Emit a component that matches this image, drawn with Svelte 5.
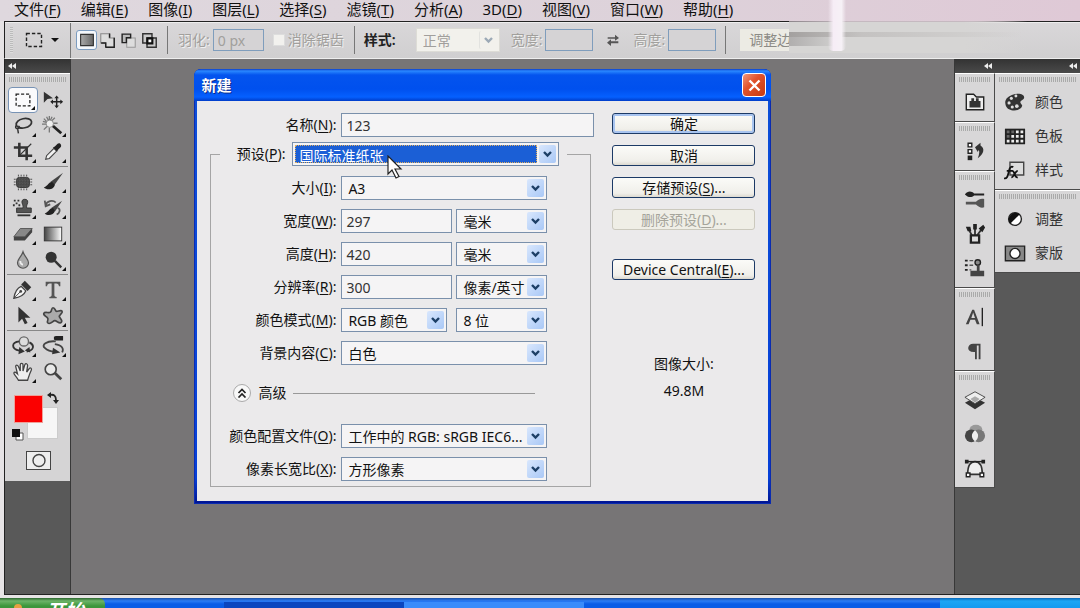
<script>
    let docName = $state('123')
    let docWidth = $state('297')
    let docHeight = $state('420')
    let resolution = $state('300')

    const menus = [
        ['文件', 'F'], ['编辑', 'E'], ['图像', 'I'], ['图层', 'L'], ['选择', 'S'], ['滤镜', 'T'],
        ['分析', 'A'], ['3D', 'D'], ['视图', 'V'], ['窗口', 'W'], ['帮助', 'H']
    ]

    // every icon is drawn on a 24 x 24 grid
    const icons = {
        marquee: '<rect x="4.5" y="5.5" width="15" height="13" fill="none" stroke="#222" stroke-width="1.4" stroke-dasharray="3.4 2"/>',
        move: '<path d="M2 3v12l4-4 6-1z" fill="#333"/><path d="M16 7l2.5 3h-1.700v3.200H20v-1.700l3 2.500-3 2.500v-1.700h-3.200V18h1.700L16 21l-2.500-3h1.700v-3.200H12v1.700L9 14l3-2.500v1.700h3.200V10h-1.700z" fill="#222"/>',
        lasso: '<ellipse cx="13" cy="9" rx="8.500" ry="5" fill="none" stroke="#333" stroke-width="1.900" transform="rotate(-12 13 9)"/><path d="M5 11c-2 2-1 4 1 4s3-2 1-3M6 14l1 6" fill="none" stroke="#333" stroke-width="1.600"/>',
        wand: '<path d="M8 1v5M8 14v5M0 10h5M12 9h5M2 4l4 4M14 3l-4 4M2 16l4-4M11 2L9 6M5 2l2 4M1 7l4 1" stroke="#777" stroke-width="1.400"/><circle cx="8.500" cy="9.500" r="4" fill="#eee" stroke="#888"/><path d="M12 12l9 8" stroke="#222" stroke-width="3"/>',
        crop: '<path d="M8 2v14h14M2 7h14v14" fill="none" stroke="#333" stroke-width="2.800"/><path d="M8 16L21 3" stroke="#333" stroke-width="1.200"/>',
        dropper: '<path d="M4 20l1-4 8-8 3 3-8 8z" fill="#f0f0f0" stroke="#444" stroke-width="1.200"/><path d="M12 7l2-1 3-3c2-2 5 1 3.500 3.500l-3 3-1 2z" fill="#222"/>',
        patch: '<rect x="5" y="7" width="14" height="11" rx="3" fill="#555" stroke="#333"/><path d="M7 4v17M10 4v17M13 4v17M16 4v17M2 9h20M2 12h20M2 15h20" stroke="#444" stroke-width="1" stroke-dasharray="2 1"/>',
        brush: '<path d="M23 2L9 12l4 4z" fill="#444"/><path d="M11 12c-4 0-4 4-9 6 3 3 11 3 12-3z" fill="#222"/>',
        stamp: '<path d="M11 4c-1 3 2 5 1 8H5v5h16v-5h-5c-1-3 2-5 1-8-1-2-5-2-6 0z" fill="#555" stroke="#333"/><path d="M6 20h14" stroke="#333" stroke-width="2"/><path d="M2 3h2v2H2zM6 3h2v2H6zM4 6h2v2H4zM1 8h2v2H1zM7 8h2v2H7z" fill="#333"/>',
        history: '<path d="M22 4L10 12l4 4z" fill="#444"/><path d="M12 12c-4 0-4 4-9 6 3 3 10 2 11-3z" fill="#222"/><path d="M4 9c1-5 8-6 11-3M3 4l1 6 5-2M17 12c4 1 2 6-1 7" fill="none" stroke="#555" stroke-width="1.900"/>',
        eraser: '<path d="M9 6h13l-8 9H2z" fill="#888" stroke="#555"/><path d="M2 15h12v4H2zM14 15l8-9v4l-8 9z" fill="#444"/>',
        gradient: '<defs><linearGradient id="grad"><stop stop-color="#444"/><stop offset="1" stop-color="#fff"/></linearGradient></defs><rect x="2.500" y="4.500" width="19" height="15" fill="url(#grad)" stroke="#333"/>',
        drop: '<path d="M12 3c2 6 6 8 6 12a6 6 0 0 1-12 0c0-4 4-6 6-12z" fill="#aaa" stroke="#555" stroke-width="1.300"/><path d="M9 13c0 3 2 4 3 4" stroke="#eee" stroke-width="2" fill="none"/>',
        dodge: '<circle cx="10" cy="9" r="6" fill="#333"/><path d="M14 13l7 7" stroke="#333" stroke-width="2.600"/>',
        pen: '<path d="M2 21c1-6 3-11 8-13l5 5c-2 5-7 7-13 8z" fill="#f4f4f4" stroke="#444" stroke-width="1.400"/><path d="M2 21l7-7" stroke="#444"/><circle cx="9.500" cy="13.500" r="1.500" fill="#444"/><path d="M10 6l4-4 7 7-4 4z" fill="#333"/>',
        type: '<path d="M4 3h16v5h-1.500c-.3-2-1-3-3-3H13.500v12c0 2 .5 2.500 2.500 2.600V21H8v-1.400c2-.1 2.500-.6 2.500-2.600V5H8.500c-2 0-2.700 1-3 3H4z" fill="#555"/>',
        arrow: '<path d="M7 2v17l4-4 3 6 3-1.500-3-5.500h6z" fill="#333"/>',
        shape: '<path d="M12 3c3 0 2 4 4 4s5-2 6 0-4 4-3 6 4 4 2 6-5-2-7-2-4 4-7 3 1-4-1-6-5-3-4-5 5 0 7-1 1-5 3-5z" fill="#aaa" stroke="#444" stroke-width="1.800"/>',
        rotate: '<circle cx="13" cy="7" r="5" fill="#ddd" stroke="#666" stroke-width="1.500"/><path d="M8 7C-1 8-1 15 8 17M19 8c6 3 5 9-3 10" fill="none" stroke="#333" stroke-width="2"/><path d="M8 13l6 5-7 3zM19 13l-5 4 6 2z" fill="#333"/>',
        orbit: '<path d="M15 7C5 6-1 11 3 14c2 2 6 4 11 4M14 10c8 1 10 5 8 9" fill="none" stroke="#444" stroke-width="2"/><path d="M12 14l8 5-9 2z" fill="#333"/><path d="M15 1h8v5h-8l-2-1V2z" fill="#222"/>',
        hand: '<path d="M7 21c-2-4-5-6-5-8 1-2 3 0 4 1L4 6c0-2 2-2 3 0l2 5V4c0-2 3-2 3 0v7l2-7c1-2 3-1 3 1l-1 7 3-4c1-1 3 0 2 2-2 4-3 8-4 11z" fill="#eee" stroke="#444" stroke-width="1.400"/>',
        zoom: '<circle cx="9.500" cy="9" r="6" fill="#e8e8e8" stroke="#444" stroke-width="1.800"/><path d="M14 13l7 7" stroke="#444" stroke-width="3"/>',
        bridge: '<path d="M2.500 20.500v-17h8l3 3h8v14z" fill="#eee" stroke="#222" stroke-width="1.500"/><path d="M6 11h2V8h3v3h2V8h3v3h2v7H6z" fill="#333"/>',
        historyPanel: '<path d="M4.500 3.500h4v4h-4zM4.500 10.500h4v4h-4z" fill="#fff" stroke="#222" stroke-width="1.500"/><path d="M4 17h5v5H4z" fill="#222"/><path d="M12 8l6-5v3c5 3 4 9-3 14 2-5 2-8 1-9l-1 2z" fill="#333"/>',
        brushes: '<path d="M1 6c3-4 7-4 10-1h11v2H11c-3 3-7 2-10-1z" fill="#222"/><path d="M2 14h11c3-3 6-4 9-3v9c-3 1-6 0-9-3H2z" fill="#555"/>',
        tools: '<path d="M9 14L5 7M12 14V5M14 14l5-7" stroke="#333" stroke-width="2"/><path d="M2 4l5 0 1 5-4 0zM10 1h4v6h-4zM16 6l5-4 2 3-3 5z" fill="#222"/><path d="M7.500 13.500h9v8h-9z" fill="#ddd" stroke="#222" stroke-width="2.500"/>',
        clone: '<path d="M1 4h3M1 9h3M1 14h3" stroke="#222" stroke-width="2"/><path d="M6 4h4M6 9h4M6 14h2" stroke="#555" stroke-width="1.500"/><circle cx="15" cy="6" r="3" fill="#888" stroke="#222" stroke-width="1.500"/><path d="M14 9h3v6h5v6H7v-6h7z" fill="#444"/>',
        character: '<path d="M2 20L9 4h2l6 16h-3l-2-5H7l-2 5zM8 13h4l-2-6z" fill="#444"/><path d="M20 2v20" stroke="#222" stroke-width="1.500"/>',
        paragraph: '<path d="M18 4v17h-2V6h-2v15h-2v-8C2 14 3 4 10 4z" fill="#444"/>',
        layers: '<path d="M1 15l11-6 11 6-11 7z" fill="#333"/><path d="M1 9l11-6 11 6-11 7z" fill="#eee" stroke="#444"/><path d="M7 11l5-3 5 3-5 4z" fill="#aaa"/>',
        channels: '<ellipse cx="13" cy="7" rx="7" ry="5" fill="#999"/><ellipse cx="8" cy="14" rx="7" ry="7" fill="#444"/><ellipse cx="16" cy="14" rx="7" ry="7" fill="#777"/><path d="M12 8c5 4 4 9 0 12-4-3-5-8 0-12z" fill="#eee"/>',
        paths: '<path d="M4 19C4 9 7 5 12 5s8 4 8 14z" fill="#eee" stroke="#333" stroke-width="1.800"/><path d="M3 5h18" stroke="#222" stroke-width="1.500"/><path d="M1 3h4v4H1zM19 3h4v4h-4z" fill="#222"/><path d="M2.500 17.500h4v4h-4zM17.500 17.500h4v4h-4z" fill="#fff" stroke="#222" stroke-width="1.500"/>',
        palette: '<path d="M3 8C8 2 22 1 22 7c0 3-5 3-4 6 1 2 3 2 1 5-4 5-15 4-17-2-1-3-1-5 1-8z" fill="#333"/><circle cx="8" cy="8" r="1.700" fill="#ddd"/><circle cx="13" cy="5.500" r="1.600" fill="#ddd"/><circle cx="5.500" cy="13" r="1.700" fill="#ddd"/><circle cx="9" cy="17.500" r="1.700" fill="#ddd"/><circle cx="14" cy="16.500" r="2" fill="#ddd"/>',
        swatches: '<path d="M1 4h22v17H1z" fill="#222"/><path d="M13 6h3v3h-3zM18 6h3v3h-3zM8 11h3v3H8zM13 11h3v3h-3zM18 11h3v3h-3zM3 16h3v3H3zM8 16h3v3H8zM13 16h3v3h-3zM18 16h3v3h-3z" fill="#eee"/><path d="M3 6h3v3H3zM8 6h3v3H8zM3 11h3v3H3z" fill="#666"/>',
        styles: '<path d="M6.500 3.500h15v14h-15z" fill="#ddd" stroke="#444" stroke-width="1.500"/><path d="M0 21c3 1 4-2 5-6l1-4c1-3 3-3 4-2M3 13h6M9 13c3 0 2 8 6 7M15 13c-3 0-4 7-7 7" fill="none" stroke="#111" stroke-width="2"/>',
        adjust: '<circle cx="12" cy="12" r="7" fill="#fff" stroke="#222" stroke-width="1.500"/><path d="M6.800 17.200a7.400 7.400 0 0 1 10.400-10.400z" fill="#111"/>',
        mask: '<path d="M1.500 4.500h21v16h-21z" fill="#888" stroke="#222" stroke-width="1.500"/><circle cx="12" cy="12.500" r="5.500" fill="#fff" stroke="#222" stroke-width="1.500"/>',
        selNew: '<defs><linearGradient id="sel"><stop stop-color="#aaa"/><stop offset="1" stop-color="#666"/></linearGradient></defs><path d="M3.500 4.500h17v15h-17z" fill="url(#sel)" stroke="#333" stroke-width="1.500"/>',
        selAdd: '<path d="M2.500 2.500h12v6h7v13h-12v-6h-7z" fill="#ddd" stroke="#888" stroke-width="1.500"/><path d="M21.500 8v13.500H9M3 15.500h6.500v6M15 2v6" fill="none" stroke="#222" stroke-width="2"/>',
        selSub: '<path d="M9.500 8.500h12v13h-12z" fill="#ddd" stroke="#999" stroke-width="1.500"/><path d="M15 3H3v12h6V8h6z" fill="#bbb" stroke="#222" stroke-width="2"/>',
        selInt: '<path d="M2.500 2.500h13v13h-13zM8.500 8.500h13v13h-13z" fill="#ccc" stroke="#333" stroke-width="2"/><path d="M9 9h7v7H9z" fill="#fff" stroke="#111" stroke-width="3"/>',
        swap: '<path d="M4 8h11V4l6 5-6 4v-3H4zM20 14H9v-3l-6 5 6 5v-4h11z" fill="#555"/>'
    }

    // third value marks tools that have a fly-out menu
    const toolGroups = [
        [['marquee', '矩形选框', true], ['move', '移动', false], ['lasso', '套索', true], ['wand', '快速选择', true], ['crop', '裁剪', true], ['dropper', '吸管', true]],
        [['patch', '修复', true], ['brush', '画笔', true], ['stamp', '图章', true], ['history', '历史画笔', true], ['eraser', '橡皮擦', true], ['gradient', '渐变', true], ['drop', '模糊', true], ['dodge', '减淡', true]],
        [['pen', '钢笔', true], ['type', '文字', true], ['arrow', '路径选择', true], ['shape', '形状', true]],
        [['rotate', '3D 旋转', true], ['orbit', '3D 环绕', true], ['hand', '抓手', true], ['zoom', '缩放', false]]
    ]

    const dockGroups = [['bridge'], ['historyPanel'], ['brushes', 'tools', 'clone'], ['character', 'paragraph'], ['layers', 'channels', 'paths']]

    const panelGroups = [
        [['palette', '颜色'], ['swatches', '色板'], ['styles', '样式']],
        [['adjust', '调整'], ['mask', '蒙版']]
    ]
</script>

{#snippet icon(name, size)}
    <svg class="icon" width={size} height={size} viewBox="0 0 24 24" aria-hidden="true">{@html icons[name]}</svg>
{/snippet}

{#snippet combo(id, value, cls)}
    <span class="combo {cls}">
        <select {id}>
            <option>{value}</option>
        </select>
        <span class="drop">
            <svg width="9" height="7" viewBox="0 0 9 7" aria-hidden="true"><path d="M1 1l3.500 3.500L8 1" fill="none" stroke="#1d3f66" stroke-width="2.400" /></svg>
        </span>
    </span>
{/snippet}

{#snippet caption(id, text, key)}
    <label for={id}>{text}(<u>{key}</u>):</label>
{/snippet}

<div class="app">
    <nav class="menubar">
        {#each menus as [text, key]}
            <button>{text}(<u>{key}</u>)</button>
        {/each}
    </nav>

    <div class="options">
        <span class="handle"></span>
        <button class="preset" aria-label="工具预设">
            {@render icon('marquee', 24)}
            <span class="caret"></span>
        </button>
        <div class="modes">
            <button class="on" aria-label="新选区">{@render icon('selNew', 18)}</button>
            <button aria-label="添加到选区">{@render icon('selAdd', 17)}</button>
            <button aria-label="从选区减去">{@render icon('selSub', 17)}</button>
            <button aria-label="与选区交叉">{@render icon('selInt', 17)}</button>
        </div>
        <div class="opt feather">
            <label for="feather">羽化:</label>
            <input id="feather" value="0 px" disabled />
            <input id="alias" type="checkbox" disabled />
            <label for="alias">消除锯齿</label>
        </div>
        <div class="opt style">
            <label class="active" for="style">样式:</label>
            {@render combo('style', '正常', 'off')}
            <label for="optw">宽度:</label>
            <input id="optw" disabled />
            {@render icon('swap', 16)}
            <label for="opth">高度:</label>
            <input id="opth" disabled />
        </div>
        <div class="opt">
            <button class="refine" disabled>调整边</button>
        </div>
    </div>
    <div class="smear"></div>
    <div class="beam"></div>

    <div class="workspace">
        <aside class="toolbox">
            <div class="head left"><i></i><i></i></div>
            <div class="tools">
                <div class="grip"></div>
                {#each toolGroups as group}
                    <div class="group">
                        {#each group as [name, label, more]}
                            <button class:more class:on={name === 'marquee'} aria-label={label}>{@render icon(name, 22)}</button>
                        {/each}
                    </div>
                {/each}
                <div class="colors">
                    <button class="back" aria-label="背景色"></button>
                    <button class="fore" aria-label="前景色"></button>
                    <svg class="flip" width="12" height="12" viewBox="0 0 12 12"><path d="M3 3c4-1 6 1 6 5" fill="none" stroke="#222" stroke-width="1.800" /><path d="M0 3l4-3v6zM6 8h6l-3 4z" fill="#222" /></svg>
                    <svg class="reset" width="12" height="12" viewBox="0 0 12 12"><path d="M4 4h7v7H4z" fill="#fff" stroke="#555" /><path d="M0 0h8v8H0z" fill="#111" /></svg>
                </div>
                <button class="quick" aria-label="快速蒙版">
                    <svg width="22" height="17" viewBox="0 0 22 17"><circle cx="11" cy="8.500" r="6" fill="#eee" stroke="#444" stroke-width="1.400" /></svg>
                </button>
            </div>
        </aside>

        <main></main>

        <aside class="dock">
            <div class="head"><i></i><i></i></div>
            {#each dockGroups as group}
                <section>
                    <div class="grip"></div>
                    {#each group as name}
                        <button aria-label={name}>{@render icon(name, 22)}</button>
                    {/each}
                </section>
            {/each}
        </aside>
        <aside class="dock wide">
            <div class="head"><i></i><i></i></div>
            {#each panelGroups as group}
                <section>
                    <div class="grip"></div>
                    {#each group as [name, label]}
                        <button>{@render icon(name, 22)}{label}</button>
                    {/each}
                </section>
            {/each}
        </aside>
    </div>

    <footer class="taskbar">
        <button class="start"><span class="flag"></span>开始</button>
        <span class="task"></span>
        <span class="task light"></span>
        <span class="tray"></span>
    </footer>

    <div class="dialog" role="dialog" aria-labelledby="dialog-title">
        <header>
            <h1 id="dialog-title">新建</h1>
            <button class="close" aria-label="关闭">
                <svg width="13" height="13" viewBox="0 0 13 13"><path d="M1.500 1.500l10 10M11.500 1.500l-10 10" stroke="#fff" stroke-width="2.400" /></svg>
            </button>
        </header>
        <form class="body" onsubmit={(e) => e.preventDefault()}>
            <div class="fields">
                <div class="row name">
                    {@render caption('name', '名称', 'N')}
                    <input id="name" bind:value={docName} />
                </div>
                <fieldset>
                    <legend>
                        {@render caption('doc-preset', '预设', 'P')}
                        {@render combo('doc-preset', '国际标准纸张', 'focus')}
                    </legend>
                    <div class="row">
                        {@render caption('size', '大小', 'I')}
                        <div class="ctl">{@render combo('size', 'A3', '')}</div>
                    </div>
                    <div class="row">
                        {@render caption('width', '宽度', 'W')}
                        <div class="ctl"><input id="width" bind:value={docWidth} />{@render combo('width-unit', '毫米', 'unit')}</div>
                    </div>
                    <div class="row">
                        {@render caption('height', '高度', 'H')}
                        <div class="ctl"><input id="height" bind:value={docHeight} />{@render combo('height-unit', '毫米', 'unit')}</div>
                    </div>
                    <div class="row">
                        {@render caption('res', '分辨率', 'R')}
                        <div class="ctl"><input id="res" bind:value={resolution} />{@render combo('res-unit', '像素/英寸', 'unit')}</div>
                    </div>
                    <div class="row">
                        {@render caption('mode', '颜色模式', 'M')}
                        <div class="ctl">{@render combo('mode', 'RGB 颜色', 'mode')}{@render combo('depth', '8 位', 'unit')}</div>
                    </div>
                    <div class="row">
                        {@render caption('bg', '背景内容', 'C')}
                        <div class="ctl">{@render combo('bg', '白色', '')}</div>
                    </div>
                    <div class="advanced">
                        <button type="button" aria-label="收起高级选项">
                            <svg width="10" height="10" viewBox="0 0 10 10"><path d="M1.500 5L5 1.500 8.500 5M1.500 9.500L5 6l3.500 3.500" fill="none" stroke="#222" stroke-width="1.700" /></svg>
                        </button>
                        <span>高级</span>
                        <hr />
                    </div>
                    <div class="row">
                        {@render caption('profile', '颜色配置文件', 'O')}
                        <div class="ctl">{@render combo('profile', '工作中的 RGB: sRGB IEC6...', '')}</div>
                    </div>
                    <div class="row">
                        {@render caption('aspect', '像素长宽比', 'X')}
                        <div class="ctl">{@render combo('aspect', '方形像素', '')}</div>
                    </div>
                </fieldset>
            </div>
            <div class="side">
                <button class="primary">确定</button>
                <button type="button">取消</button>
                <button type="button">存储预设(<u>S</u>)...</button>
                <button type="button" disabled>删除预设(<u>D</u>)...</button>
                <button type="button" class="central">Device Central(<u>E</u>)...</button>
                <p>图像大小:<br />49.8M</p>
            </div>
        </form>
        <svg class="cursor" width="16" height="24" viewBox="0 0 16 24"><path d="M1 1v18l4-4 4 8 3-1.500-4-7.500h6z" fill="#fff" stroke="#222" stroke-width="1.200" /></svg>
    </div>
</div>

<style>
    :global(body) {
        margin: 0;
    }

    .app {
        position: relative;
        display: flex;
        flex-direction: column;
        height: 100vh;
        overflow: hidden;
        background: #e6e3e5;
        color: #111;
        font: 14px/20px 'Noto Sans', 'Noto Sans CJK SC', sans-serif;
    }

    button, input, select {
        box-sizing: border-box;
        margin: 0;
        padding: 0;
        border: 0;
        border-radius: 0;
        background: none;
        color: inherit;
        font: inherit;
    }

    button {
        display: flex;
        align-items: center;
        justify-content: center;
        white-space: nowrap;
    }

    u {
        text-underline-offset: 2px;
    }

    label {
        white-space: nowrap;
    }

    .icon {
        display: block;
        flex: none;
    }

    .menubar {
        display: flex;
        flex: none;
        gap: 20px;
        height: 21px;
        padding-left: 14px;
        overflow: hidden;
        background: linear-gradient(90deg, #dfd8de, #ddd2da 60%, #dfc9d6);
    }

    .menubar button {
        height: 17px;
        font-size: 15px;
    }

    .options {
        display: flex;
        flex: none;
        align-items: center;
        box-sizing: border-box;
        height: 38px;
        margin-left: 4px;
        border-top: 1px solid #222;
        border-bottom: 1px solid #eee;
        border-left: 1px solid #222;
        background: linear-gradient(#d9d7d9, #d0cfd0);
        box-shadow: inset 0 1px #eee;
    }

    .handle {
        width: 3px;
        height: 26px;
        margin-left: 5px;
        background: repeating-linear-gradient(#bbb 0 1px, #ddd 1px 2px);
    }

    .preset {
        gap: 5px;
        height: 35px;
        padding: 0 11px 0 9px;
        border-right: 1px solid #777;
    }

    .caret {
        border: 4px solid transparent;
        border-top-color: #111;
        border-bottom: 0;
    }

    .modes {
        display: flex;
        align-items: center;
        height: 28px;
        padding: 0 7px 0 5px;
        border-right: 1px solid #777;
    }

    .modes button {
        width: 21px;
        height: 20px;
    }

    .modes .on {
        border: 1px solid #7c9cc0;
        border-radius: 3px;
        background: #f4f7fb;
    }

    .opt {
        display: flex;
        align-items: center;
        height: 28px;
        color: #a19f9c;
    }

    .opt label {
        text-shadow: 1px 1px #f0f0f0;
    }

    .opt input {
        width: 48px;
        height: 22px;
        border: 1px solid #7f9dbc;
        background: #d5d3d5;
    }

    .feather {
        gap: 3px;
        padding: 0 10px;
        border-right: 1px solid #777;
    }

    .feather #feather {
        width: 51px;
        padding-left: 4px;
    }

    .feather #alias {
        width: 12px;
        height: 12px;
        margin-left: 6px;
        border-color: #ddd;
        background: #f2f1ee;
        appearance: none;
    }

    .style {
        gap: 3px;
        padding: 0 9px;
        border-right: 1px solid #777;
    }

    .style .active {
        margin-right: 17px;
        color: #222;
        font-weight: 600;
        text-shadow: none;
    }

    .style .icon {
        margin: 0 9px;
    }

    .refine {
        justify-content: flex-start;
        width: 90px;
        height: 22px;
        margin-left: 14px;
        padding-left: 9px;
        background: #ecebe4;
        color: #8c8b86;
    }

    /* soft light reflection that crosses both bars */
    .smear {
        position: absolute;
        top: 21px;
        right: 0;
        left: 789px;
        height: 32px;
        background:
            linear-gradient(90deg, #8d868b, #c5b9c0 20%, #c5b9c0 60%, #c5b9c000 82%) 0 0 / 100% 1px no-repeat,
            linear-gradient(90deg, #a3a09f, #c4c2c1 25%, #d0d0cd00 80%) 0 11px / 100% 5px no-repeat,
            linear-gradient(90deg, #b0aeae, #cfcecd) 0 16px / 46px 9px no-repeat,
            linear-gradient(90deg, #d6d5d4, #d6d5d4 60%, #d6d5d400 82%);
    }

    .beam {
        position: absolute;
        top: 0;
        left: 828px;
        width: 18px;
        height: 51px;
        border-radius: 0 0 5px 5px;
        background: linear-gradient(90deg, #f5eaf400, #f6edf6 30%, #f6f1f6 75%, #f5eaf400);
    }

    .workspace {
        display: flex;
        flex: 1;
        min-height: 0;
        margin-left: 4px;
        border-bottom: 1px solid #222;
        border-left: 1px solid #222;
        background: #595959;
    }

    main {
        flex: 1;
        border: 1px solid #383838;
        border-width: 0 1px;
        background: #777576;
    }

    .head {
        display: flex;
        align-items: center;
        justify-content: flex-end;
        height: 14px;
        padding: 0 3px;
        background: linear-gradient(#333, #4a4a4a);
    }

    .head.left {
        justify-content: flex-start;
    }

    .head i {
        border: 3px solid transparent;
        border-right: 4px solid #eee;
        border-left: 0;
    }

    .toolbox {
        flex: none;
        width: 65px;
    }

    .tools {
        padding: 3px 0 11px;
        border-top: 1px solid #fff;
        background: #d5d4d5;
    }

    .grip {
        height: 5px;
        margin: 0 4px 3px;
        background: repeating-linear-gradient(90deg, #aaa 0 1px, #d8d8d8 1px 2px);
    }

    .group {
        display: grid;
        grid-template-columns: 30px 30px;
        margin: 0 2px;
        padding: 2px 1px 1px;
        border-top: 1px solid #888;
    }

    .grip + .group {
        border-top: 0;
    }

    .group button {
        position: relative;
        height: 26px;
    }

    .group .on {
        border: 1px solid #7893b5;
        border-radius: 4px;
        background: #fafafc;
    }

    .group .more::after {
        position: absolute;
        right: 2px;
        bottom: 2px;
        border: 2px solid #111;
        border-top-color: transparent;
        border-left-color: transparent;
        content: '';
    }

    .colors {
        position: relative;
        height: 65px;
    }

    .colors * {
        position: absolute;
    }

    .fore {
        top: 9px;
        left: 9px;
        width: 29px;
        height: 28px;
        border: 1px solid #f0a098;
        background: #fb0000;
    }

    .back {
        top: 21px;
        left: 22px;
        width: 31px;
        height: 32px;
        border: 1px solid #ccc;
        background: #f6f6f6;
    }

    .flip {
        top: 6px;
        left: 42px;
    }

    .reset {
        top: 43px;
        left: 7px;
    }

    .quick {
        width: 25px;
        height: 19px;
        margin: 0 auto 0 21px;
        border: 1px solid #444;
        background: #eee;
    }

    .dock {
        flex: none;
        width: 40px;
    }

    .dock section {
        padding: 3px 0 2px;
        border: 1px solid #4a4a4a;
        border-top-color: #fff;
        border-left: 0;
        background: #d8d7d8;
    }

    .dock button {
        width: 100%;
        height: 34px;
        color: #333;
    }

    .wide {
        width: 85px;
    }

    .wide section {
        border-right: 0;
    }

    .wide button {
        justify-content: flex-start;
        gap: 9px;
        padding-left: 9px;
    }

    .taskbar {
        display: flex;
        flex: none;
        height: 10px;
        margin-top: 3px;
        overflow: hidden;
        background: linear-gradient(#1a50a8, #2c7cf4 3px, #0a5ce6 6px);
    }

    .start {
        align-items: flex-start;
        justify-content: flex-start;
        gap: 24px;
        width: 105px;
        padding: 1px 0 0 14px;
        border-radius: 0 6px 0 0;
        background: linear-gradient(#2d6630, #6cb468 3px, #3c963b 8px);
        color: #fff;
        font-size: 19px;
        font-style: italic;
        font-weight: 700;
        line-height: 24px;
    }

    .flag {
        width: 8px;
        height: 4px;
        margin-top: 5px;
        border-radius: 4px 4px 0 0;
        background: #e8a040;
    }

    .task {
        width: 180px;
        margin-top: 4px;
        background: #0b46bf;
    }

    .start + .task {
        margin-left: 119px;
    }

    .task.light {
        background: #3a8cfb;
    }

    .tray {
        width: 140px;
        margin-left: auto;
        background: linear-gradient(#0a67b8, #1ca6f4 3px, #149af0);
    }

    .dialog {
        position: absolute;
        top: 69px;
        left: 18%;
        box-sizing: border-box;
        width: min(577px, 80%);
        padding: 0 3px 3px;
        border-radius: 7px 7px 0 0;
        background: linear-gradient(#0d4fd8, #0640d8 94%, #00138f);
        box-shadow: inset 0 0 0 1px #0a2bb0;
    }

    .dialog header {
        display: flex;
        align-items: center;
        justify-content: space-between;
        height: 32px;
        margin: 0 -3px;
        padding: 0 5px 0 7px;
        box-sizing: border-box;
        border-radius: 7px 7px 0 0;
        background: linear-gradient(#0a3cc8, #2a88ff 2px, #0454ee 6px, #0050ee 20px, #0560ff 28px, #003cc8);
    }

    h1 {
        margin: 0;
        color: #fff;
        font-size: 15px;
        text-shadow: 1px 1px #0b2a86;
    }

    .close {
        width: 24px;
        height: 24px;
        border: 1px solid #fff;
        border-radius: 4px;
        background: linear-gradient(135deg, #f0977c, #e1532c 40%, #c63a10);
    }

    .body {
        display: flex;
        gap: 18px;
        padding: 12px 13px 14px;
        background: #ebeaeb;
    }

    .fields {
        flex: 1;
        min-width: 0;
    }

    .row {
        display: flex;
        align-items: center;
        gap: 5px;
        height: 24px;
        margin-bottom: 9px;
    }

    .row label {
        flex: none;
        width: 125px;
        text-align: right;
    }

    .row input {
        height: 24px;
        padding: 0 4px;
        border: 1px solid #7a90ab;
        background: #f5f4f5;
        color: #333;
    }

    .name {
        margin-bottom: 5px;
        padding-left: 1px;
    }

    .name input {
        flex: 1;
        min-width: 0;
    }

    .ctl {
        display: flex;
        justify-content: space-between;
        width: 206px;
    }

    .ctl input {
        width: 111px;
    }

    .combo {
        display: flex;
        flex: 1;
        box-sizing: border-box;
        height: 24px;
        padding: 2px;
        border: 1px solid #7a90ab;
        background: #f5f4f5;
    }

    .combo select {
        flex: 1;
        min-width: 0;
        padding-left: 4px;
        outline: none;
        appearance: none;
    }

    .combo.unit {
        flex: none;
        width: 91px;
    }

    .combo.mode {
        flex: none;
        width: 106px;
    }

    .combo.focus {
        flex: none;
        width: 267px;
        padding: 2px;
    }

    .focus select {
        padding-left: 3px;
        margin-right: 2px;
        border: 1px dotted #e0b060;
        background: #1b5fd6;
        color: #fff;
    }

    .combo.off {
        flex: none;
        width: 84px;
        margin-right: 8px;
        border-color: #dddcd6;
        background: #f2f1ec;
        color: #a19f9c;
    }

    .drop {
        display: flex;
        align-items: center;
        justify-content: center;
        width: 17px;
        border-radius: 2px;
        background: linear-gradient(135deg, #d9e7fd, #a9c8f6);
    }

    .off .drop {
        border-left: 1px solid #ccc;
        background: none;
        opacity: 0.4;
    }

    fieldset {
        min-width: 0;
        margin: 0 3px 0 0;
        padding: 10px 0 5px;
        border: 1px solid #a5a5a5;
    }

    fieldset .row:last-child {
        margin-bottom: 0;
    }

    legend {
        display: flex;
        align-items: center;
        gap: 7px;
        margin-left: 9px;
        padding: 0 8px 0 14px;
    }

    legend label {
        width: 51px;
        text-align: right;
    }

    .advanced {
        display: flex;
        align-items: center;
        gap: 7px;
        height: 24px;
        margin: 16px 55px 19px 22px;
    }

    .advanced button {
        width: 18px;
        height: 18px;
        border: 1px solid #aaa;
        border-radius: 50%;
        background: #f8f8f8;
    }

    hr {
        flex: 1;
        margin: 0;
        border: 0;
        border-top: 1px solid #999;
    }

    .side {
        display: flex;
        flex: none;
        flex-direction: column;
        gap: 11px;
        width: 143px;
    }

    .side button {
        height: 21px;
        border: 1px solid #1c3a66;
        border-radius: 3px;
        background: linear-gradient(#fbfbf8, #f0efea 80%, #dcd9d0);
    }

    .side .primary {
        box-shadow: inset 0 0 0 2px #a8c4f0;
    }

    .side button:disabled {
        border-color: #cbc9bd;
        background: #efeee6;
        color: #a5a49b;
    }

    .side .central {
        margin-top: 18px;
    }

    .side p {
        margin: 59px 0 0;
        line-height: 27px;
        text-align: center;
    }

    .cursor {
        position: absolute;
        top: 86px;
        left: 193px;
    }
</style>
